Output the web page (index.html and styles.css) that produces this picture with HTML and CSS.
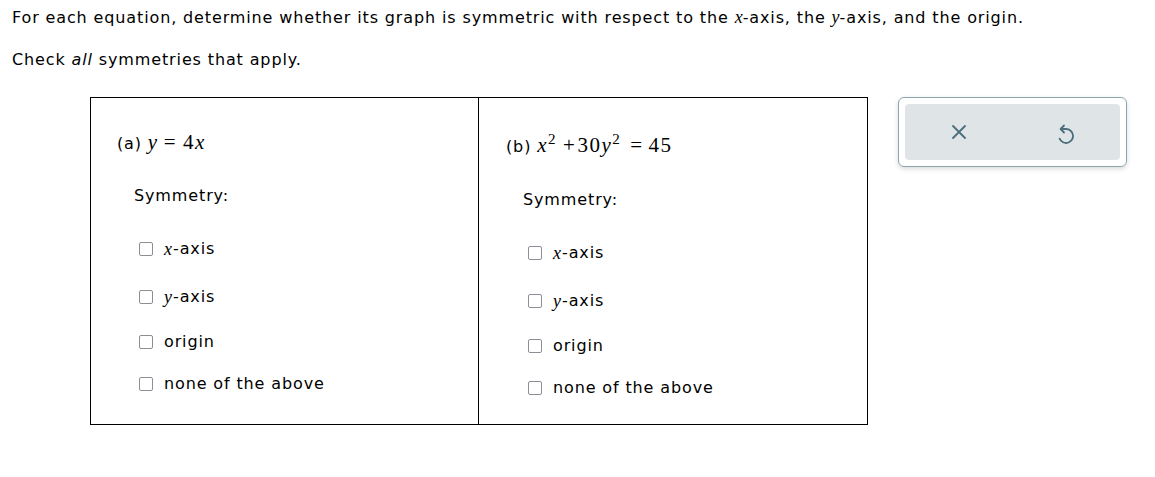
FILE: index.html
```html
<!DOCTYPE html>
<html>
<head>
<meta charset="utf-8">
<link rel="stylesheet" href="styles.css">
</head>
<body>
<p class="intro">For each equation, determine whether its graph is symmetric with respect to the <span class="mv">x</span>-axis, the <span class="mv">y</span>-axis, and the origin.</p>
<p class="intro second">Check <i>all</i> symmetries that apply.</p>
<div class="main">
  <div class="grid">
    <div class="cell cell-a">
      <div class="eq">(a) <span class="math"><span class="mv">y</span><span class="op">=</span>4<span class="mv">x</span></span></div>
      <div class="sym">Symmetry:</div>
      <ul class="opts">
        <li><span class="box"></span><span class="mv">x</span>-axis</li>
        <li><span class="box"></span><span class="mv">y</span>-axis</li>
        <li class="plain"><span class="box"></span>origin</li>
        <li class="plain"><span class="box"></span>none of the above</li>
      </ul>
    </div>
    <div class="cell cell-b">
      <div class="eq">(b) <span class="math"><span class="mv">x</span><sup>2</sup><span class="op2">+</span>30<span class="mv">y</span><sup>2</sup><span class="op3">=</span>45</span></div>
      <div class="sym">Symmetry:</div>
      <ul class="opts">
        <li><span class="box"></span><span class="mv">x</span>-axis</li>
        <li><span class="box"></span><span class="mv">y</span>-axis</li>
        <li class="plain"><span class="box"></span>origin</li>
        <li class="plain"><span class="box"></span>none of the above</li>
      </ul>
    </div>
  </div>
  <div class="tools">
    <div class="tools-inner">
      <span class="icon">
        <svg width="16" height="16" viewBox="0 0 16 16"><path d="M2 2 L14 14 M14 2 L2 14" stroke="#4a6e7c" stroke-width="1.8" fill="none" stroke-linecap="round"/></svg>
      </span>
      <span class="icon">
        <svg class="undo" width="20" height="20" viewBox="0 -2.5 20 20"><path d="M3.6 14.2 A7 7 0 1 0 10 4.5 L5 4.5" stroke="#4a6e7c" stroke-width="1.8" fill="none" stroke-linecap="round"/><path d="M8 1 L4.6 4.5 L8 8" stroke="#4a6e7c" stroke-width="1.8" fill="none" stroke-linecap="round" stroke-linejoin="round"/></svg>
      </span>
    </div>
  </div>
</div>
</body>
</html>
```
FILE: styles.css
```css
html, body {
  margin: 0;
  background: #ffffff;
}
body {
  font-family: "DejaVu Sans", Verdana, sans-serif;
  font-size: 16px;
  letter-spacing: 0.87px;
  color: #000;
  padding: 6px 12px 0 12px;
}
.intro {
  margin: 0;
  line-height: 22px;
}
.second {
  margin-top: 20px;
}
.mv {
  font-family: "Liberation Serif", "Times New Roman", serif;
  font-style: italic;
  font-size: 18px;
  letter-spacing: 0;
}
.main {
  display: flex;
  align-items: flex-start;
  margin-top: 26px;
  margin-left: 78px;
}
.grid {
  display: grid;
  grid-template-columns: 387px 389px;
  border: 1px solid #000;
  height: 326px;
}
.cell + .cell {
  border-left: 1px solid #000;
}
.cell-a {
  padding: 33px 0 0 26px;
}
.cell-b {
  padding: 33px 0 0 27px;
}
.eq {
  line-height: 22px;
  height: 22px;
}
.math {
  font-family: "Liberation Serif", "Times New Roman", serif;
  font-size: 21px;
  letter-spacing: 1.5px;
}
.math .mv {
  font-size: 21px;
  letter-spacing: 1.5px;
}
.math sup {
  font-size: 15px;
  vertical-align: 8px;
  line-height: 0;
}
.op {
  margin: 0 6px 0 5px;
}
.op2 {
  margin: 0 1px 0 6px;
}
.op3 {
  margin: 0 5px 0 9px;
}
.cell-b .eq {
  margin-top: 3px;
}
.sym {
  margin-top: 32px;
  margin-left: 17px;
  line-height: 22px;
}
.cell-b .sym {
  margin-top: 33px;
}
.opts {
  list-style: none;
  margin: 31px 0 0 22px;
  padding: 0;
}
.opts li {
  display: flex;
  align-items: center;
  height: 22px;
  margin-bottom: 26px;
  line-height: 22px;
}
.opts li.plain {
  margin-bottom: 20px;
}
.opts li:nth-child(2) {
  margin-bottom: 23px;
}
.box {
  width: 12px;
  height: 12px;
  border: 1.5px solid #8d8d96;
  border-radius: 2px;
  margin-right: 11px;
  flex: none;
}
.opts .mv {
  font-size: 18px;
  margin-right: 1px;
}
.tools {
  margin-left: 30px;
  border: 1px solid #8ea4ad;
  border-radius: 6px;
  box-shadow: 0 2px 5px rgba(0, 0, 0, 0.15);
  padding: 6px;
  width: 215px;
  height: 56px;
}
.tools-inner {
  height: 56px;
  background: #dfe5e7;
  border-radius: 4px;
  display: flex;
  align-items: center;
  justify-content: space-around;
}
.icon {
  display: flex;
  align-items: center;
  justify-content: center;
  width: 100px;
}
.icon svg {
  display: block;
}
.undo {
  overflow: visible;
}
```
